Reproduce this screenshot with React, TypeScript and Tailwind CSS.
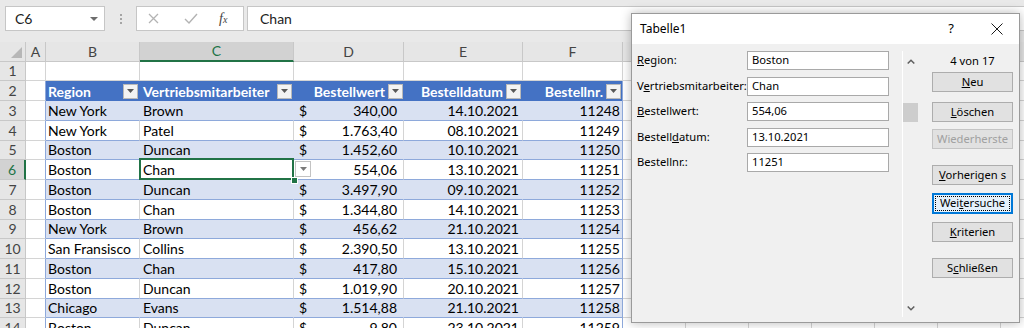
import React from 'react';

const ROWS: [string, string, string, string, string][] = [
  ['New York', 'Brown', '340,00', '14.10.2021', '11248'],
  ['New York', 'Patel', '1.763,40', '08.10.2021', '11249'],
  ['Boston', 'Duncan', '1.452,60', '10.10.2021', '11250'],
  ['Boston', 'Chan', '554,06', '13.10.2021', '11251'],
  ['Boston', 'Duncan', '3.497,90', '09.10.2021', '11252'],
  ['Boston', 'Chan', '1.344,80', '14.10.2021', '11253'],
  ['New York', 'Brown', '456,62', '21.10.2021', '11254'],
  ['San Fransisco', 'Collins', '2.390,50', '13.10.2021', '11255'],
  ['Boston', 'Chan', '417,80', '15.10.2021', '11256'],
  ['Boston', 'Duncan', '1.019,90', '20.10.2021', '11257'],
  ['Chicago', 'Evans', '1.514,88', '21.10.2021', '11258'],
  ['Boston', 'Duncan', '9,80', '23.10.2021', '11259'],
];

// columns G.. sit behind the dialog, only their grid lines peek out
const EXTRA = ['G', 'H', 'I', 'J', 'K', 'L', 'M'];

function FilterButton() {
  return (
    <div className="w-[15px] h-[15px] shrink-0 bg-[#f3f3f3] border border-[#b9b9b9] flex items-center justify-center">
      <svg width="7" height="4" viewBox="0 0 7 4">
        <polygon points="0,0 7,0 3.5,4" fill="#595959" />
      </svg>
    </div>
  );
}

function FormulaBar() {
  return (
    <div className="h-[42px] bg-[#e9e9e9] flex items-start pt-[6px] pl-[5px]">
      {/* name box */}
      <div className="w-[100px] h-[25px] shrink-0 bg-white border border-[#c6c6c6] flex items-center justify-between pl-[9px] pr-[6px]">
        <span className="text-[14px] text-[#222]">C6</span>
        <svg width="8" height="4" viewBox="0 0 8 4">
          <polygon points="0,0 8,0 4,4" fill="#6d6d6d" />
        </svg>
      </div>
      <div className="w-[31px] h-[25px] shrink-0 flex flex-col items-center justify-center gap-[2px]">
        <span className="w-[2px] h-[2px] bg-[#a5a5a5]" />
        <span className="w-[2px] h-[2px] bg-[#a5a5a5]" />
        <span className="w-[2px] h-[2px] bg-[#a5a5a5]" />
      </div>
      {/* function buttons */}
      <div className="w-[108px] h-[25px] shrink-0 bg-white border border-[#c6c6c6] flex items-center pl-[11px]">
        <svg width="11" height="11" viewBox="0 0 11 11">
          <path d="M1 1 L10 10 M10 1 L1 10" stroke="#b3b3b3" strokeWidth="1.3" />
        </svg>
        <svg width="14" height="11" viewBox="0 0 14 11" className="ml-[25px]">
          <path d="M1 6 L5 10 L13 1" stroke="#b3b3b3" strokeWidth="1.4" fill="none" />
        </svg>
        <span className="ml-[21px] font-['Liberation_Serif',serif] italic text-[14px] text-[#444] leading-none">
          f<span className="text-[10px]">x</span>
        </span>
      </div>
      <div className="ml-[3px] flex-1 h-[25px] bg-white border border-r-0 border-[#c6c6c6] flex items-center pl-[12px]">
        <span className="text-[14px] text-[#222]">Chan</span>
      </div>
    </div>
  );
}

function ColumnHeader() {
  const base = 'shrink-0 h-full flex items-center justify-center border-r border-b border-[#c8c8c8] bg-[#e6e6e6] text-[#444]';
  return (
    <div className="flex h-[19.5px]">
      <div className="w-[26px] shrink-0 h-full bg-[#e6e6e6] border-r border-b border-[#c8c8c8] flex items-end justify-end p-[3px]">
        <svg width="11" height="11" viewBox="0 0 11 11">
          <polygon points="11,0 11,11 0,11" fill="#b7b7b7" />
        </svg>
      </div>
      <div className={`${base} w-[20px]`}>A</div>
      <div className={`${base} w-[94px]`}>B</div>
      <div className="shrink-0 h-full w-[154px] flex items-center justify-center border-r border-[#c8c8c8] border-b-2 border-b-[#217346] bg-[#d2d2d2] text-[#217346]">
        C
      </div>
      <div className={`${base} w-[110px]`}>D</div>
      <div className={`${base} w-[119px]`}>E</div>
      <div className={`${base} w-[100px]`}>F</div>
      {EXTRA.map((c) => (
        <div key={c} className={`${base} w-[63px]`} />
      ))}
    </div>
  );
}

function RowHead({ n, active }: { n: number; active?: boolean }) {
  if (active) {
    return (
      <div className="w-[26px] shrink-0 h-full bg-[#d2d2d2] border-b border-[#c8c8c8] border-r-2 border-r-[#217346] flex items-center justify-center text-[#217346]">
        {n}
      </div>
    );
  }
  return (
    <div className="w-[26px] shrink-0 h-full bg-[#e6e6e6] border-r border-b border-[#c8c8c8] flex items-center justify-center text-[#444]">
      {n}
    </div>
  );
}

function ExtraCells() {
  return (
    <>
      {EXTRA.map((c) => (
        <div key={c} className="w-[63px] shrink-0 h-full border-r border-b border-[#d4d4d4]" />
      ))}
    </>
  );
}

function Sheet() {
  return (
    <div>
      <ColumnHeader />
      {/* row 1 */}
      <div className="flex h-[19.75px]">
        <RowHead n={1} />
        <div className="w-[20px] shrink-0 h-full border-r border-b border-[#d4d4d4]" />
        <div className="w-[94px] shrink-0 h-full border-r border-b border-[#d4d4d4]" />
        <div className="w-[154px] shrink-0 h-full border-r border-b border-[#d4d4d4]" />
        <div className="w-[110px] shrink-0 h-full border-r border-b border-[#d4d4d4]" />
        <div className="w-[119px] shrink-0 h-full border-r border-b border-[#d4d4d4]" />
        <div className="w-[100px] shrink-0 h-full border-r border-b border-[#d4d4d4]" />
        <ExtraCells />
      </div>
      {/* row 2: table header */}
      <div className="flex h-[19.75px]">
        <RowHead n={2} />
        <div className="w-[20px] shrink-0 h-full border-b border-[#d4d4d4] border-r border-r-[#8ea9db]" />
        <div className="w-[94px] shrink-0 h-full bg-[#4472c4] flex items-center pl-[2px] pr-[2px] text-white font-bold">
          <span className="flex-1">Region</span>
          <FilterButton />
        </div>
        <div className="w-[154px] shrink-0 h-full bg-[#4472c4] flex items-center pl-[3px] pr-[2px] text-white font-bold">
          <span className="flex-1">Vertriebsmitarbeiter</span>
          <FilterButton />
        </div>
        <div className="w-[110px] shrink-0 h-full bg-[#4472c4] flex items-center justify-end pr-[1px] gap-[3px] text-white font-bold">
          <span>Bestellwert</span>
          <FilterButton />
        </div>
        <div className="w-[119px] shrink-0 h-full bg-[#4472c4] flex items-center justify-end pr-[2px] gap-[3px] text-white font-bold">
          <span>Bestelldatum</span>
          <FilterButton />
        </div>
        <div className="w-[100px] shrink-0 h-full bg-[#4472c4] border-r border-[#8ea9db] flex items-center justify-end pr-[1px] gap-[3px] text-white font-bold">
          <span>Bestellnr.</span>
          <FilterButton />
        </div>
        <ExtraCells />
      </div>
      {ROWS.map((r, i) => {
        const n = i + 3;
        const band = n % 2 === 1;
        const active = n === 6;
        const bg = band ? 'bg-[#d9e1f2] border-r-[#d9e1f2]' : 'bg-white border-r-[#d4d4d4]';
        const cell = `shrink-0 h-full border-r border-b border-b-[#8ea9db] flex items-center ${bg}`;
        return (
          <div key={n} className="flex h-[19.75px]">
            <RowHead n={n} active={active} />
            <div className="w-[20px] shrink-0 h-full border-b border-[#d4d4d4] border-r border-r-[#8ea9db]" />
            <div className={`${cell} w-[94px] pl-[2px] whitespace-nowrap`}>{r[0]}</div>
            <div className={`${cell} w-[154px] pl-[3px] relative`}>
              {r[1]}
              {active && (
                <>
                  <div className="absolute -left-[1px] -top-[2px] w-[155px] h-[22px] border-2 border-[#217346] z-10" />
                  <div className="absolute left-[151px] top-[17px] w-[5px] h-[5px] bg-[#217346] border border-white z-20 box-content" />
                  <div className="absolute left-[155px] top-[1px] w-[16px] h-[16px] bg-white border border-[#c3c3c3] z-10 flex items-center justify-center">
                    <svg width="7" height="4" viewBox="0 0 7 4">
                      <polygon points="0,0 7,0 3.5,4" fill="#7a7a7a" />
                    </svg>
                  </div>
                </>
              )}
            </div>
            <div className={`${cell} w-[110px] pl-[5px] pr-[6px] justify-between`}>
              <span>$</span>
              <span>{r[2]}</span>
            </div>
            <div className={`${cell} w-[119px] pr-[3px] justify-end`}>{r[3]}</div>
            <div className={`shrink-0 h-full border-r border-b border-[#8ea9db] flex items-center w-[100px] pr-[2px] justify-end ${band ? 'bg-[#d9e1f2]' : 'bg-white'}`}>
              {r[4]}
            </div>
            <ExtraCells />
          </div>
        );
      })}
    </div>
  );
}

function Btn({
  children,
  className = '',
  disabled,
  focused,
}: {
  children: React.ReactNode;
  className?: string;
  disabled?: boolean;
  focused?: boolean;
}) {
  if (focused) {
    return (
      <div className={`relative h-[21px] bg-[#e5f1fb] border-2 border-[#0078d7] flex items-center justify-center ${className}`}>
        <div className="absolute inset-[1px] border border-dotted border-black" />
        <span>{children}</span>
      </div>
    );
  }
  return (
    <div
      className={`h-[20px] border flex items-center justify-center whitespace-nowrap overflow-hidden ${
        disabled ? 'bg-[#e1e1e1] border-[#c4c4c4] text-[#a0a0a0]' : 'bg-[#e1e1e1] border-[#adadad] text-black'
      } ${className}`}
    >
      {children}
    </div>
  );
}

function Field({ label, value }: { label: React.ReactNode; value: string }) {
  return (
    <div className="flex items-center h-[19px]">
      <div className="w-[115px] shrink-0 pl-[5px] whitespace-nowrap">{label}</div>
      <div className="w-[142px] shrink-0 h-[19px] bg-white border border-[#a9a9a9] flex items-center pl-[4px]">{value}</div>
    </div>
  );
}

function Dialog() {
  return (
    <div className="absolute left-[631px] top-[13px] w-[389px] h-[310px] border border-[#9a9a9a] bg-[#f0f0f0] shadow-[0_0_10px_rgba(0,0,0,0.28)] flex flex-col font-['Noto_Sans','Liberation_Sans',sans-serif] text-[11.2px] text-black">
      <div className="h-[30px] shrink-0 bg-white flex items-center pl-[8px]">
        <span className="text-[12px]">Tabelle1</span>
        <span className="ml-auto text-[13px] mr-[37px]">?</span>
        <svg width="12" height="12" viewBox="0 0 12 12" className="mr-[16px]">
          <path d="M0.5 0.5 L11.5 11.5 M11.5 0.5 L0.5 11.5" stroke="#1a1a1a" strokeWidth="1" />
        </svg>
      </div>
      <div className="flex-1 flex">
        <div className="w-[270px] shrink-0 flex flex-col pt-[7px] gap-[6.5px]">
          <Field label={<><span className="underline">R</span>egion:</>} value="Boston" />
          <Field label={<>V<span className="underline">e</span>rtriebsmitarbeiter:</>} value="Chan" />
          <Field label={<><span className="underline">B</span>estellwert:</>} value="554,06" />
          <Field label={<>Bestell<span className="underline">d</span>atum:</>} value="13.10.2021" />
          <Field label="Bestellnr.:" value="11251" />
        </div>
        <div className="w-[16px] shrink-0 mt-[7px] mb-[5px] border-l border-white flex flex-col">
          <div className="h-[20px] flex items-center justify-center">
            <svg width="8" height="5" viewBox="0 0 8 5">
              <path d="M0.7 4.5 L4 1.2 L7.3 4.5" stroke="#606060" strokeWidth="1.5" fill="none" />
            </svg>
          </div>
          <div className="flex-1">
            <div className="mt-[32px] h-[19px] bg-[#cdcdcd]" />
          </div>
          <div className="h-[18px] flex items-center justify-center">
            <svg width="8" height="5" viewBox="0 0 8 5">
              <path d="M0.7 0.5 L4 3.8 L7.3 0.5" stroke="#606060" strokeWidth="1.5" fill="none" />
            </svg>
          </div>
        </div>
        <div className="w-[81px] shrink-0 ml-[14px] flex flex-col pt-[10px]">
          <div className="h-[14px] leading-[14px] text-center">4 von 17</div>
          <Btn className="mt-[4px]">
            <span className="underline">N</span>eu
          </Btn>
          <Btn className="mt-[10px]">
            <span className="underline">L</span>öschen
          </Btn>
          <Btn className="mt-[7px]" disabled>
            Wiederherste
          </Btn>
          <Btn className="mt-[16px] justify-start pl-[6px]">
            <span>
              <span className="underline">V</span>orherigen s
            </span>
          </Btn>
          <Btn className="mt-[8px]" focused>
            Wei<span className="underline">t</span>ersuche
          </Btn>
          <Btn className="mt-[8px]">
            <span className="underline">K</span>riterien
          </Btn>
          <Btn className="mt-[16px]">
            S<span className="underline">c</span>hließen
          </Btn>
        </div>
      </div>
    </div>
  );
}

export default function App() {
  return (
    <div className="relative w-[1024px] h-[328px] overflow-hidden bg-white font-['Lato','Liberation_Sans',sans-serif] text-[14px] text-black">
      <FormulaBar />
      <Sheet />
      <Dialog />
    </div>
  );
}
